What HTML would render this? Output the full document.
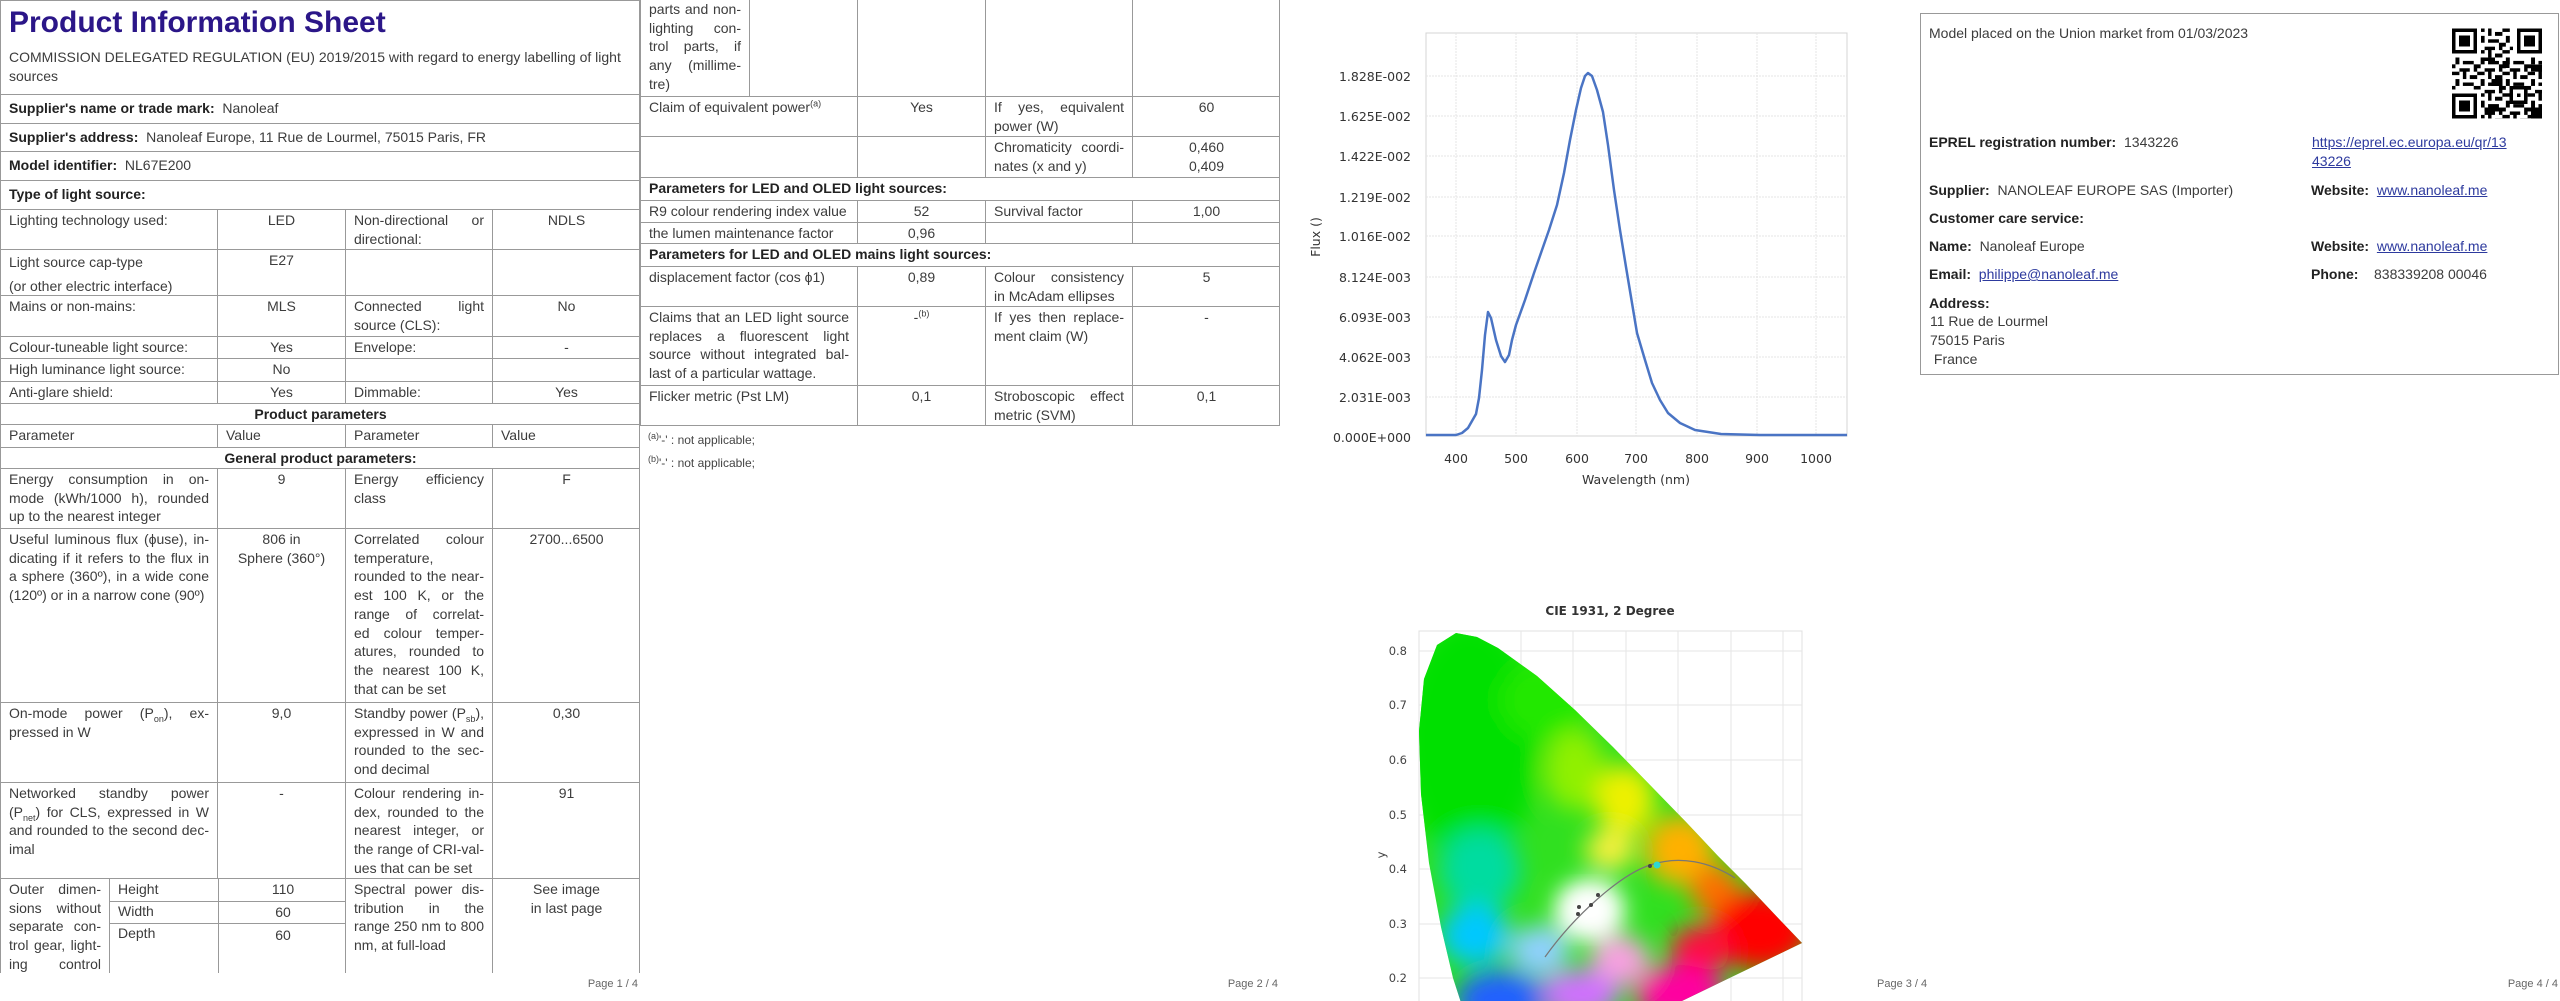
<!DOCTYPE html>
<html><head><meta charset="utf-8">
<style>
*{margin:0;padding:0}
html,body{width:2560px;height:1001px;background:#fff;overflow:hidden;position:relative}
body{font-family:"Liberation Sans",Arial,sans-serif;color:#3c3c3c}
.pg{position:absolute;top:0;width:640px;height:1001px;overflow:hidden}
.tb{position:absolute;left:0;top:0;width:640px;overflow:hidden;border-left:1px solid #999;border-right:1px solid #999;box-sizing:border-box}
.r{position:absolute;left:-1px;width:640px;border-top:1px solid #999;box-sizing:border-box}
.r>div{position:absolute;top:0;bottom:0;border-left:1px solid #999;padding:1px 8px 0;box-sizing:border-box;font-size:14px;line-height:18.7px}
.a{left:0;width:217px}
.b{left:217px;width:128px;text-align:center}
.c{left:345px;width:147px}
.d{left:492px;width:148px;text-align:center}
.f{left:0;width:640px}
.a1{left:0;width:109px}
.a2{left:109px;width:108px}
.j{text-align:justify;text-align-last:justify}
.bd{font-weight:bold;color:#222}
.ctr{text-align:center}
sub,sup{font-size:9px;line-height:0}
.foot{position:absolute;font-size:11px;color:#666;top:978px}
.p4{position:absolute;font-size:14px;line-height:19px;white-space:nowrap;color:#3c3c3c}
.p4 b{color:#222}
a,.lk{color:#2d3a9e;text-decoration:underline}
</style></head><body>

<!-- PAGE 1 -->
<div class="pg" style="left:0">
<div class="tb" style="height:973px;border-top:1px solid #999">
 <div style="position:absolute;left:8px;top:3px;font-size:30px;font-weight:bold;color:#2b1688;line-height:38px;white-space:nowrap">Product Information Sheet</div>
 <div style="position:absolute;left:8px;top:47px;font-size:14px;line-height:19.3px;white-space:nowrap">COMMISSION DELEGATED REGULATION (EU) 2019/2015 with regard to energy labelling of light<br>sources</div>

 <div class="r" style="top:93px;height:29px"><div class="f" style="padding-top:4px"><span class="bd">Supplier's name or trade mark:</span>&nbsp; Nanoleaf</div></div>
 <div class="r" style="top:122px;height:28px"><div class="f" style="padding-top:4px"><span class="bd">Supplier's address:</span>&nbsp; Nanoleaf Europe, 11 Rue de Lourmel, 75015 Paris, FR</div></div>
 <div class="r" style="top:150px;height:29px"><div class="f" style="padding-top:4px"><span class="bd">Model identifier:</span>&nbsp; NL67E200</div></div>
 <div class="r" style="top:179px;height:29px"><div class="f bd" style="padding-top:4px">Type of light source:</div></div>

 <div class="r" style="top:208px;height:40px">
  <div class="a">Lighting technology used:</div><div class="b">LED</div>
  <div class="c"><div class="j">Non-directional or</div>directional:</div><div class="d">NDLS</div></div>
 <div class="r" style="top:248px;height:46px">
  <div class="a" style="line-height:23.5px">Light source cap-type<br>(or other electric interface)</div><div class="b">E27</div>
  <div class="c"></div><div class="d"></div></div>
 <div class="r" style="top:294px;height:41px">
  <div class="a">Mains or non-mains:</div><div class="b">MLS</div>
  <div class="c"><div class="j">Connected light</div>source (CLS):</div><div class="d">No</div></div>
 <div class="r" style="top:335px;height:22px">
  <div class="a">Colour-tuneable light source:</div><div class="b">Yes</div>
  <div class="c">Envelope:</div><div class="d">-</div></div>
 <div class="r" style="top:357px;height:23px">
  <div class="a">High luminance light source:</div><div class="b">No</div>
  <div class="c"></div><div class="d"></div></div>
 <div class="r" style="top:380px;height:22px">
  <div class="a">Anti-glare shield:</div><div class="b">Yes</div>
  <div class="c">Dimmable:</div><div class="d">Yes</div></div>
 <div class="r" style="top:402px;height:21px"><div class="f bd ctr">Product parameters</div></div>
 <div class="r" style="top:423px;height:23px">
  <div class="a">Parameter</div><div class="b" style="text-align:left">Value</div>
  <div class="c">Parameter</div><div class="d" style="text-align:left">Value</div></div>
 <div class="r" style="top:446px;height:21px"><div class="f bd ctr">General product parameters:</div></div>
 <div class="r" style="top:467px;height:60px">
  <div class="a"><div class="j">Energy consumption in on-</div><div class="j">mode (kWh/1000 h), rounded</div>up to the nearest integer</div>
  <div class="b">9</div>
  <div class="c"><div class="j">Energy efficiency</div>class</div><div class="d">F</div></div>
 <div class="r" style="top:527px;height:174px">
  <div class="a"><div class="j">Useful luminous flux (ϕuse), in-</div><div class="j">dicating if it refers to the flux in</div><div class="j">a sphere (360º), in a wide cone</div>(120º) or in a narrow cone (90º)</div>
  <div class="b">806 in<br>Sphere (360°)</div>
  <div class="c" style="white-space:nowrap"><div class="j">Correlated colour</div>temperature,<div class="j">rounded to the near-</div><div class="j">est 100 K, or the</div><div class="j">range of correlat-</div><div class="j">ed colour temper-</div><div class="j">atures, rounded to</div><div class="j">the nearest 100 K,</div>that can be set</div>
  <div class="d">2700...6500</div></div>
 <div class="r" style="top:701px;height:80px">
  <div class="a"><div class="j">On-mode power (P<sub>on</sub>), ex-</div>pressed in W</div>
  <div class="b">9,0</div>
  <div class="c" style="white-space:nowrap"><div class="j">Standby power (P<sub>sb</sub>),</div><div class="j">expressed in W and</div><div class="j">rounded to the sec-</div>ond decimal</div>
  <div class="d">0,30</div></div>
 <div class="r" style="top:781px;height:96px">
  <div class="a"><div class="j">Networked standby power</div><div class="j">(P<sub>net</sub>) for CLS, expressed in W</div><div class="j">and rounded to the second dec-</div>imal</div>
  <div class="b">-</div>
  <div class="c" style="white-space:nowrap"><div class="j">Colour rendering in-</div><div class="j">dex, rounded to the</div><div class="j">nearest integer, or</div><div class="j">the range of CRI-val-</div>ues that can be set</div>
  <div class="d">91</div></div>
 <div class="r" style="top:877px;height:120px">
  <div class="a1" style="white-space:nowrap"><div class="j">Outer dimen-</div><div class="j">sions without</div><div class="j">separate con-</div><div class="j">trol gear, light-</div><div class="j">ing control</div></div>
  <div class="a2" style="padding:0;width:236px">
    <div style="position:absolute;left:0;top:0;width:108px;height:22px;padding:1px 8px 0;box-sizing:border-box">Height</div>
    <div style="position:absolute;left:0;top:22px;width:236px;border-top:1px solid #999"></div>
    <div style="position:absolute;left:0;top:22px;width:108px;padding:1px 8px 0;box-sizing:border-box">Width</div>
    <div style="position:absolute;left:0;top:44px;width:236px;border-top:1px solid #999"></div>
    <div style="position:absolute;left:0;top:44px;width:108px;padding:1px 8px 0;box-sizing:border-box">Depth</div>
    <div style="position:absolute;left:108px;top:0;bottom:0;border-left:1px solid #999;width:128px;text-align:center">
      <div style="height:22px;padding-top:1px">110</div><div style="height:22px;padding-top:1px">60</div><div style="padding-top:1px">60</div></div>
  </div>
  <div class="c" style="white-space:nowrap"><div class="j">Spectral power dis-</div><div class="j">tribution in the</div><div class="j">range 250 nm to 800</div>nm, at full-load</div>
  <div class="d">See image<br>in last page</div></div>
</div>
<div class="foot" style="right:2px">Page 1 / 4</div>
</div>

<!-- PAGE 2 -->
<div class="pg" style="left:640px">
<div class="tb" style="height:426px;border-bottom:1px solid #999">
 <div class="r" style="top:-1px;height:97px">
  <div class="a1" style="white-space:nowrap;padding-top:0"><div class="j">parts and non-</div><div class="j">lighting con-</div><div class="j">trol parts, if</div><div class="j">any (millime-</div>tre)</div>
  <div class="a2"></div><div class="b"></div><div class="c"></div><div class="d"></div></div>
 <div class="r" style="top:96px;height:40px">
  <div class="a">Claim of equivalent power<sup>(a)</sup></div><div class="b">Yes</div>
  <div class="c"><div class="j">If yes, equivalent</div>power (W)</div><div class="d">60</div></div>
 <div class="r" style="top:136px;height:41px">
  <div class="a"></div><div class="b"></div>
  <div class="c" style="white-space:nowrap"><div class="j">Chromaticity coordi-</div>nates (x and y)</div><div class="d">0,460<br>0,409</div></div>
 <div class="r" style="top:177px;height:23px"><div class="f bd">Parameters for LED and OLED light sources:</div></div>
 <div class="r" style="top:200px;height:22px">
  <div class="a" style="white-space:nowrap">R9 colour rendering index value</div><div class="b">52</div>
  <div class="c">Survival factor</div><div class="d">1,00</div></div>
 <div class="r" style="top:222px;height:21px">
  <div class="a">the lumen maintenance factor</div><div class="b">0,96</div>
  <div class="c"></div><div class="d"></div></div>
 <div class="r" style="top:243px;height:23px"><div class="f bd">Parameters for LED and OLED mains light sources:</div></div>
 <div class="r" style="top:266px;height:40px">
  <div class="a">displacement factor (cos ϕ1)</div><div class="b">0,89</div>
  <div class="c"><div class="j">Colour consistency</div>in McAdam ellipses</div><div class="d">5</div></div>
 <div class="r" style="top:306px;height:79px">
  <div class="a" style="white-space:nowrap"><div class="j">Claims that an LED light source</div><div class="j">replaces a fluorescent light</div><div class="j">source without integrated bal-</div>last of a particular wattage.</div>
  <div class="b">-<sup>(b)</sup></div>
  <div class="c" style="white-space:nowrap"><div class="j">If yes then replace-</div>ment claim (W)</div><div class="d">-</div></div>
 <div class="r" style="top:385px;height:41px">
  <div class="a">Flicker metric (Pst LM)</div><div class="b">0,1</div>
  <div class="c"><div class="j">Stroboscopic effect</div>metric (SVM)</div><div class="d">0,1</div></div>
</div>
<div style="position:absolute;left:8px;top:429px;font-size:12px;line-height:23px;color:#444"><sup>(a)</sup>'-' : not applicable;<br><sup>(b)</sup>'-' : not applicable;</div>
<div class="foot" style="right:2px">Page 2 / 4</div>
</div>

<!-- PAGE 3 -->
<svg style="position:absolute;left:1280px;top:0" width="640" height="1001" viewBox="1280 0 640 1001" font-family="DejaVu Sans, sans-serif">
 <rect x="1426" y="33" width="421" height="403" fill="#fff" stroke="#d4d4d4"/>
 <g stroke="#e4e4e4" stroke-width="1" stroke-dasharray="2,1">
  <line x1="1426" x2="1847" y1="76" y2="76"/><line x1="1426" x2="1847" y1="116" y2="116"/>
  <line x1="1426" x2="1847" y1="156" y2="156"/><line x1="1426" x2="1847" y1="197" y2="197"/>
  <line x1="1426" x2="1847" y1="236" y2="236"/><line x1="1426" x2="1847" y1="277" y2="277"/>
  <line x1="1426" x2="1847" y1="317" y2="317"/><line x1="1426" x2="1847" y1="357" y2="357"/>
  <line x1="1426" x2="1847" y1="397" y2="397"/>
  <line y1="33" y2="436" x1="1456" x2="1456"/><line y1="33" y2="436" x1="1516" x2="1516"/>
  <line y1="33" y2="436" x1="1577" x2="1577"/><line y1="33" y2="436" x1="1636" x2="1636"/>
  <line y1="33" y2="436" x1="1697" x2="1697"/><line y1="33" y2="436" x1="1757" x2="1757"/>
  <line y1="33" y2="436" x1="1816" x2="1816"/>
 </g>
 <g font-size="12.5" fill="#333" text-anchor="end">
  <text x="1411" y="81">1.828E-002</text><text x="1411" y="121">1.625E-002</text>
  <text x="1411" y="161">1.422E-002</text><text x="1411" y="202">1.219E-002</text>
  <text x="1411" y="241">1.016E-002</text><text x="1411" y="282">8.124E-003</text>
  <text x="1411" y="322">6.093E-003</text><text x="1411" y="362">4.062E-003</text>
  <text x="1411" y="402">2.031E-003</text><text x="1411" y="442">0.000E+000</text>
 </g>
 <g font-size="12.5" fill="#333" text-anchor="middle">
  <text x="1456" y="463">400</text><text x="1516" y="463">500</text><text x="1577" y="463">600</text>
  <text x="1636" y="463">700</text><text x="1697" y="463">800</text><text x="1757" y="463">900</text>
  <text x="1816" y="463">1000</text>
  <text x="1636" y="484">Wavelength (nm)</text>
  <text transform="translate(1320,237) rotate(-90)">Flux ()</text>
 </g>
 <polyline fill="none" stroke="#4a74c4" stroke-width="2.5" stroke-linejoin="round" points="1426,435 1456,435 1462,433 1468,428 1472,421 1476,414 1479,398 1482,370 1485,335 1488,312 1491,318 1496,340 1501,356 1505,362 1509,355 1512,340 1516,325 1525,300 1534,273 1542,250 1549,230 1557,205 1564,173 1570,140 1576,110 1581,88 1585,76 1588,73 1592,76 1597,90 1603,112 1608,145 1614,190 1620,230 1626,267 1632,303 1637,333 1645,360 1652,383 1660,400 1668,413 1680,423 1695,430 1721,434 1760,435 1847,435"/>

 <!-- CIE -->
 <text x="1610" y="615" font-size="12" font-weight="bold" fill="#333" text-anchor="middle">CIE 1931, 2 Degree</text>
 <rect x="1419" y="631" width="383" height="380" fill="#fff" stroke="#e0e0e0"/>
 <g stroke="#e6e6e6">
  <line x1="1419" x2="1802" y1="651" y2="651"/><line x1="1419" x2="1802" y1="705" y2="705"/>
  <line x1="1419" x2="1802" y1="760" y2="760"/><line x1="1419" x2="1802" y1="815" y2="815"/>
  <line x1="1419" x2="1802" y1="869" y2="869"/><line x1="1419" x2="1802" y1="924" y2="924"/>
  <line x1="1419" x2="1802" y1="978" y2="978"/>
  <line y1="631" y2="1001" x1="1521" x2="1521"/><line y1="631" y2="1001" x1="1573" x2="1573"/>
  <line y1="631" y2="1001" x1="1626" x2="1626"/><line y1="631" y2="1001" x1="1678" x2="1678"/>
  <line y1="631" y2="1001" x1="1731" x2="1731"/><line y1="631" y2="1001" x1="1783" x2="1783"/>
 </g>
 <g font-size="11.5" fill="#444" text-anchor="end">
  <text x="1407" y="655">0.8</text><text x="1407" y="709">0.7</text><text x="1407" y="764">0.6</text>
  <text x="1407" y="819">0.5</text><text x="1407" y="873">0.4</text><text x="1407" y="928">0.3</text>
  <text x="1407" y="982">0.2</text>
  <text transform="translate(1385,855) rotate(-90)" text-anchor="middle">y</text>
 </g>
 <defs>
  <clipPath id="loc"><polygon points="1508,1085 1492,1071 1482,1056 1474,1040 1465,1015 1453,978 1441,927 1429,863 1421,794 1419,731 1424,679 1437,645 1456,633 1477,637 1498,648 1537,676 1575,710 1613,747 1650,785 1686,822 1718,856 1746,884 1779,919 1802,943"/></clipPath>
  <filter id="bl" x="-50%" y="-50%" width="200%" height="200%"><feGaussianBlur stdDeviation="12"/></filter>
 </defs>
 <g clip-path="url(#loc)">
  <rect x="1400" y="620" width="420" height="400" fill="#30e020"/>
  <g filter="url(#bl)">
   <ellipse cx="1470" cy="740" rx="70" ry="120" fill="#00e000"/>
   <ellipse cx="1545" cy="700" rx="45" ry="40" fill="#20e800"/>
   <ellipse cx="1575" cy="770" rx="30" ry="40" fill="#90f000"/>
   <ellipse cx="1625" cy="800" rx="30" ry="35" fill="#eef000"/>
   <ellipse cx="1610" cy="850" rx="25" ry="20" fill="#f8f040"/>
   <ellipse cx="1680" cy="850" rx="35" ry="35" fill="#ffb000"/>
   <ellipse cx="1715" cy="890" rx="25" ry="25" fill="#ff7000"/>
   <ellipse cx="1760" cy="930" rx="50" ry="40" fill="#ff0000"/>
   <ellipse cx="1700" cy="950" rx="30" ry="25" fill="#ff1040"/>
   <ellipse cx="1680" cy="995" rx="45" ry="30" fill="#ff00a0"/>
   <ellipse cx="1620" cy="960" rx="30" ry="25" fill="#f8a0e0"/>
   <ellipse cx="1580" cy="995" rx="40" ry="25" fill="#d070ff"/>
   <ellipse cx="1480" cy="870" rx="40" ry="40" fill="#00dca0"/>
   <ellipse cx="1475" cy="935" rx="35" ry="30" fill="#00c8ff"/>
   <ellipse cx="1500" cy="1000" rx="45" ry="30" fill="#2060ff"/>
   <ellipse cx="1540" cy="950" rx="30" ry="25" fill="#90d0ff"/>
   <ellipse cx="1590" cy="910" rx="35" ry="30" fill="#ffffff"/>
  </g>
  <ellipse cx="1588" cy="910" rx="20" ry="18" fill="#fff" filter="url(#bl)"/>
 </g>
 <path d="M1545,957 C1575,915 1620,875 1650,865 S1710,862 1735,878" fill="none" stroke="#777" stroke-width="1.2"/>
 <g fill="#444"><circle cx="1578" cy="914" r="2"/><circle cx="1579" cy="907" r="2"/><circle cx="1591" cy="905" r="2"/><circle cx="1598" cy="895" r="2"/><circle cx="1650" cy="866" r="2"/></g>
 <circle cx="1657" cy="865" r="3.5" fill="#30d8d0"/>
</svg>
<div class="foot" style="left:1877px">Page 3 / 4</div>

<!-- PAGE 4 -->
<div style="position:absolute;left:1920px;top:13px;width:639px;height:362px;border:1px solid #999;box-sizing:border-box"></div>
<div class="p4" style="left:1929px;top:24px">Model placed on the Union market from 01/03/2023</div>
<svg style="position:absolute;left:2452px;top:27px" width="90" height="93" viewBox="0 0 25 25" shape-rendering="crispEdges">
 <defs><pattern id="qp" width="7" height="6" patternUnits="userSpaceOnUse">
  <rect x="0" y="0" width="2" height="1"/><rect x="3" y="0" width="1" height="2"/><rect x="5" y="1" width="2" height="1"/>
  <rect x="1" y="2" width="1" height="2"/><rect x="4" y="3" width="2" height="1"/><rect x="0" y="4" width="1" height="1"/>
  <rect x="2" y="5" width="3" height="1"/><rect x="6" y="4" width="1" height="2"/><rect x="3" y="3" width="1" height="1"/>
 </pattern></defs>
 <rect x="0" y="0" width="25" height="25" fill="url(#qp)"/>
 <g fill="#fff"><rect x="0" y="0" width="8" height="8"/><rect x="17" y="0" width="8" height="8"/><rect x="0" y="17" width="8" height="8"/><rect x="16" y="16" width="5" height="5"/></g>
 <g fill="#000">
  <path d="M0 0h7v7h-7z M1 1v5h5v-5z M2 2h3v3h-3z" fill-rule="evenodd"/>
  <path d="M18 0h7v7h-7z M19 1v5h5v-5z M20 2h3v3h-3z" fill-rule="evenodd"/>
  <path d="M0 18h7v7h-7z M1 19v5h5v-5z M2 20h3v3h-3z" fill-rule="evenodd"/>
  <path d="M16 16h5v5h-5z M17 17v3h3v-3z M18 18h1v1h-1z" fill-rule="evenodd"/>
  <rect x="9" y="8" width="3" height="1"/><rect x="14" y="9" width="2" height="2"/><rect x="22" y="10" width="3" height="2"/>
  <rect x="9" y="22" width="4" height="1"/><rect x="22" y="22" width="3" height="3"/><rect x="11" y="14" width="3" height="2"/>
 </g>
</svg>
<div class="p4" style="left:1929px;top:133px"><b>EPREL registration number:</b>&nbsp; 1343226</div>
<div class="p4" style="left:2312px;top:133px"><span class="lk">https://eprel.ec.europa.eu/qr/13</span><br><span class="lk">43226</span></div>
<div class="p4" style="left:1929px;top:181px"><b>Supplier:</b>&nbsp; NANOLEAF EUROPE SAS (Importer)</div>
<div class="p4" style="left:2311px;top:181px"><b>Website:</b>&nbsp; <span class="lk">www.nanoleaf.me</span></div>
<div class="p4" style="left:1929px;top:209px"><b>Customer care service:</b></div>
<div class="p4" style="left:1929px;top:237px"><b>Name:</b>&nbsp; Nanoleaf Europe</div>
<div class="p4" style="left:2311px;top:237px"><b>Website:</b>&nbsp; <span class="lk">www.nanoleaf.me</span></div>
<div class="p4" style="left:1929px;top:265px"><b>Email:</b>&nbsp; <span class="lk">philippe@nanoleaf.me</span></div>
<div class="p4" style="left:2311px;top:265px"><b>Phone:</b>&nbsp;&nbsp;&nbsp; 838339208 00046</div>
<div class="p4" style="left:1929px;top:294px"><b>Address:</b></div>
<div class="p4" style="left:1930px;top:312px">11 Rue de Lourmel<br>75015 Paris<br>&nbsp;France</div>
<div class="foot" style="right:2px">Page 4 / 4</div>
</body></html>
